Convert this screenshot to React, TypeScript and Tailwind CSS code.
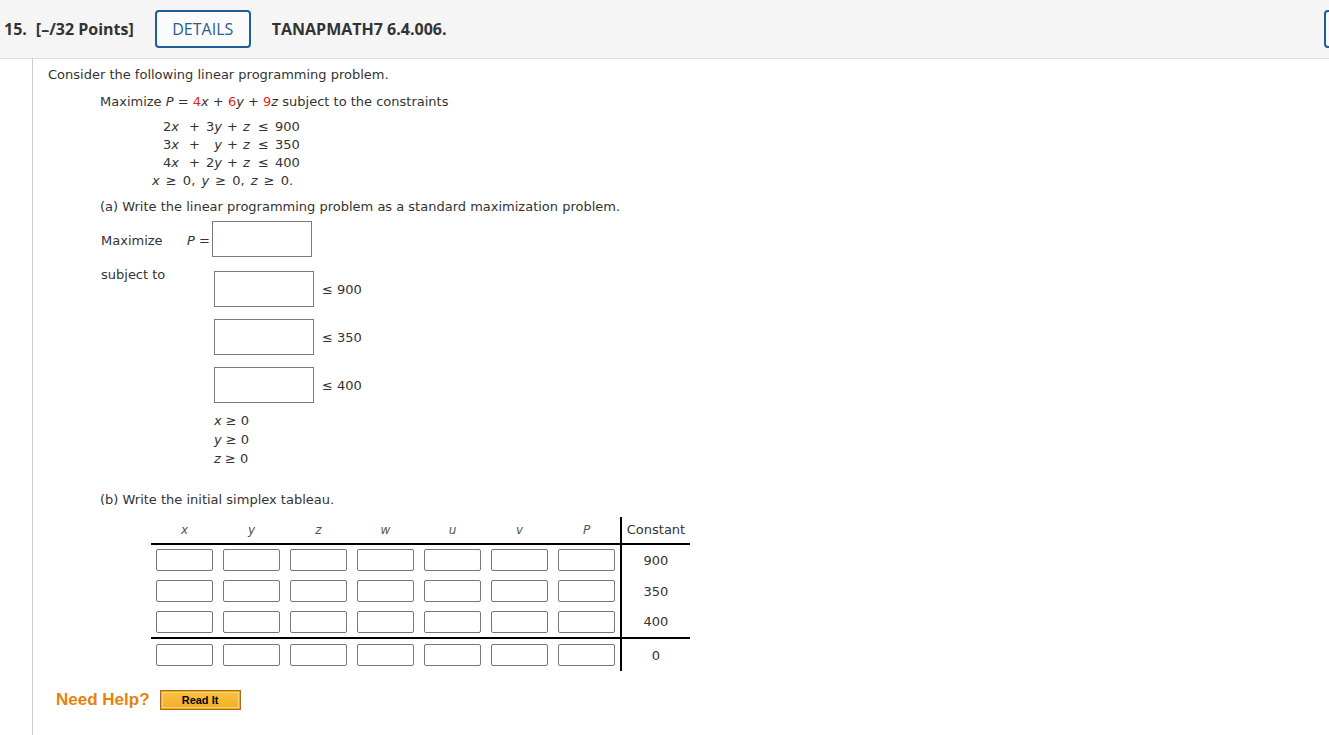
import React from "react";

const V = "font-['DejaVu_Sans',Verdana,sans-serif]";

function Box({ w = "w-[100px]", h = "h-[36px]" }: { w?: string; h?: string }) {
  return <div className={`${w} ${h} border border-[#7a7a7a] bg-white`} />;
}

function TBox() {
  return <div className="ml-[5px] w-[57px] h-[22px] border border-[#777] rounded-[2px] bg-white" />;
}

const R = ({ children }: { children: React.ReactNode }) => (
  <span className="text-[#e5251d]">{children}</span>
);
const I = ({ children }: { children: React.ReactNode }) => <i>{children}</i>;

function ConstraintRow({ a, b, c }: { a: React.ReactNode; b: React.ReactNode; c: string }) {
  return (
    <div className="flex h-[18px] items-center pl-[11px]">
      <span className="w-[26px]">{a}</span>
      <span className="w-[14px]">+</span>
      <span className="w-[19px] text-right">{b}</span>
      <span className="w-[5px]" />
      <span className="w-[16px]">+</span>
      <span className="w-[15px]"><I>z</I></span>
      <span className="w-[17px]">≤</span>
      <span>{c}</span>
    </div>
  );
}

export default function App() {
  const cols = ["x", "y", "z", "w", "u", "v", "P"];
  const consts = ["900", "350", "400"];
  return (
    <div className="w-[1329px] h-[735px] overflow-hidden bg-white relative">
      {/* header */}
      <div className="h-[59px] bg-[#f5f5f5] border-b border-[#dcdcdc] flex items-center font-['Open_Sans',sans-serif] text-[#333] relative">
        <span className="ml-[4px] font-bold text-[16px]">15.</span>
        <span className="ml-[9px] font-bold text-[16px]">[–/32 Points]</span>
        <div className="ml-[21px] w-[96px] h-[38px] border-2 border-[#1f5c99] rounded-[4px] bg-[#fbfbfb] flex items-center justify-center text-[16px] font-medium text-[#2b5d8c]">
          DETAILS
        </div>
        <span className="ml-[21px] font-bold text-[16px]">TANAPMATH7 6.4.006.</span>
        <div className="absolute left-[1324px] top-[10px] w-[40px] h-[38px] border-2 border-[#1f5c99] rounded-[4px] bg-[#fbfbfb]" />
      </div>

      {/* body */}
      <div className="flex h-[676px]">
        <div className="w-[33px] border-r border-[#cccccc] shrink-0" />
        <div className={`pl-[15px] ${V} text-[13px] leading-[16px] text-[#333]`}>
          <div className="mt-[8px]">Consider the following linear programming problem.</div>

          <div className="ml-[52px]">
            <div className="mt-[11px]">
              Maximize <I>P</I> = <R>4</R><I>x</I> + <R>6</R><I>y</I> + <R>9</R><I>z</I> subject to the constraints
            </div>

            <div className="mt-[8px] ml-[52px]">
              <ConstraintRow a={<>2<I>x</I></>} b={<>3<I>y</I></>} c="900" />
              <ConstraintRow a={<>3<I>x</I></>} b={<I>y</I>} c="350" />
              <ConstraintRow a={<>4<I>x</I></>} b={<>2<I>y</I></>} c="400" />
              <div className="h-[18px] flex items-center">
                <span className="[word-spacing:2px]"><I>x</I> ≥ 0, <I>y</I> ≥ 0, <I>z</I> ≥ 0.</span>
              </div>
            </div>

            <div className="mt-[9px]">(a) Write the linear programming problem as a standard maximization problem.</div>

            <div className="mt-[6px] flex items-center">
              <span className="ml-[1px] w-[86px] pt-[3px]">Maximize</span>
              <span className="w-[25px] pt-[3px]"><I>P</I> =</span>
              <Box />
            </div>

            <div className="mt-[10px] flex">
              <span className="ml-[1px] w-[113px]">subject to</span>
              <div className="pt-[4px] flex flex-col">
                {consts.map((c) => (
                  <div key={c} className="flex items-center mb-[12px]">
                    <Box />
                    <span className="ml-[8px] pt-[2px]">≤ {c}</span>
                  </div>
                ))}
                <div className="-mt-[4px] leading-[19px]">
                  <div><I>x</I> ≥ 0</div>
                  <div><I>y</I> ≥ 0</div>
                  <div><I>z</I> ≥ 0</div>
                </div>
              </div>
            </div>

            <div className="mt-[24px]">(b) Write the initial simplex tableau.</div>

            <div className="mt-[9px] ml-[51px] w-[539px]">
              <div className="flex h-[28px] border-b-2 border-black">
                {cols.map((c) => (
                  <div key={c} className="w-[67px] flex items-center justify-center italic text-[12px] text-[#555]">
                    {c}
                  </div>
                ))}
                <div className="w-[70px] border-l-2 border-black flex items-center justify-center">Constant</div>
              </div>
              {consts.map((c, i) => (
                <div key={c} className={`flex ${i === 2 ? "border-b-2 border-black h-[32px]" : "h-[31px]"}`}>
                  {cols.map((k) => (
                    <div key={k} className="w-[67px] pt-[4px]">
                      <TBox />
                    </div>
                  ))}
                  <div className="w-[70px] border-l-2 border-black flex items-center justify-center">{c}</div>
                </div>
              ))}
              <div className="flex h-[32px]">
                {cols.map((k) => (
                  <div key={k} className="w-[67px] pt-[5px]">
                    <TBox />
                  </div>
                ))}
                <div className="w-[70px] border-l-2 border-black flex items-center justify-center pt-[1px]">0</div>
              </div>
            </div>
          </div>

          <div className="mt-[19px] ml-[8px] flex items-center">
            <span className="font-['Liberation_Sans',Arial,sans-serif] font-bold text-[17px] text-[#e8820c]">Need Help?</span>
            <div className="ml-[10px] w-[81px] h-[20px] border border-[#a86c1c] bg-[#f7a61c] p-[1px]">
              <div className="w-full h-full border border-[#fcd27a] bg-gradient-to-b from-[#f9c13e] to-[#f4b024] flex items-center justify-center font-['Liberation_Sans',Arial,sans-serif] font-bold text-[11px] text-black leading-none">
                Read It
              </div>
            </div>
          </div>
        </div>
      </div>
    </div>
  );
}
